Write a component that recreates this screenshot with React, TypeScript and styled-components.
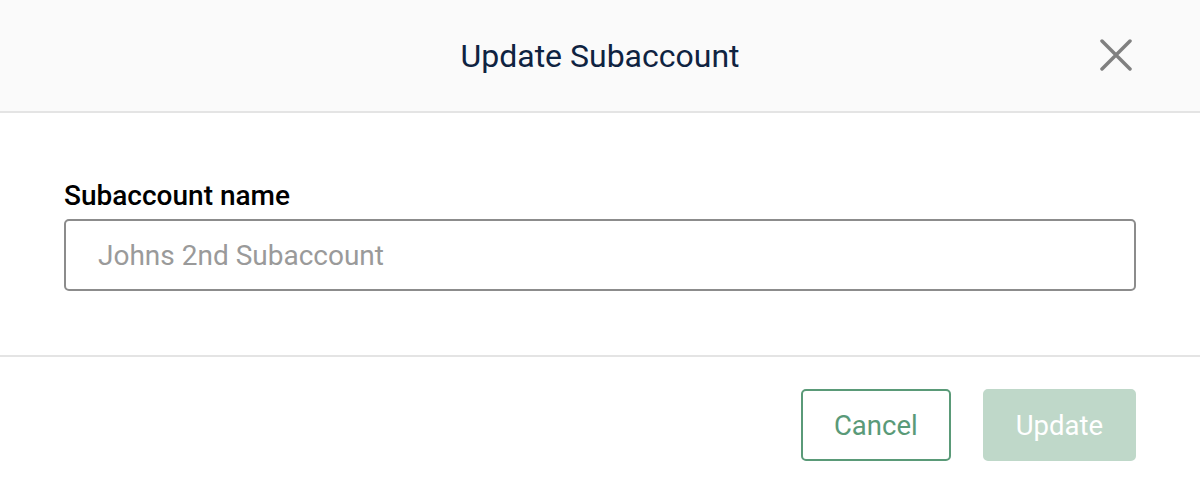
import styled, { createGlobalStyle } from "styled-components";

const GlobalStyle = createGlobalStyle`
  html, body {
    margin: 0;
    padding: 0;
    background: #fff;
    font-family: Roboto, "Liberation Sans", sans-serif;
  }
`;

const Modal = styled.div`
  width: 1200px;
  height: 490px;
  display: flex;
  flex-direction: column;
  background: #fff;
  overflow: hidden;
`;

const Header = styled.header`
  position: relative;
  height: 111px;
  display: flex;
  align-items: center;
  justify-content: center;
  background: #fafafa;
  border-bottom: 2px solid #e4e4e4;
  flex-shrink: 0;
`;

const Title = styled.h2`
  margin: 0;
  font-size: 32px;
  font-weight: 400;
  color: #0f2341;
`;

const CloseButton = styled.button`
  position: absolute;
  right: 66px;
  top: 37px;
  width: 36px;
  height: 36px;
  padding: 0;
  border: 0;
  background: none;
  display: flex;
  align-items: center;
  justify-content: center;
  cursor: pointer;
`;

const Body = styled.section`
  padding: 67px 64px 64px;
  border-bottom: 2px solid #e4e4e4;
  display: flex;
  flex-direction: column;
  gap: 7px;
`;

const Label = styled.label`
  font-size: 28px;
  line-height: 32px;
  font-weight: 500;
  color: #000;
`;

const Input = styled.input`
  box-sizing: border-box;
  height: 72px;
  width: 100%;
  padding: 0 32px;
  border: 2px solid #8c8c8c;
  border-radius: 5px;
  font-family: inherit;
  font-size: 28px;
  color: #222;
  outline: none;

  &::placeholder {
    color: #9a9a9a;
  }
`;

const Footer = styled.footer`
  display: flex;
  justify-content: flex-end;
  gap: 32px;
  padding: 32px 64px;
`;

const Button = styled.button<{ $primary?: boolean }>`
  box-sizing: border-box;
  height: 72px;
  padding: 0 31px;
  border-radius: 5px;
  font-family: inherit;
  font-size: 27.5px;
  border: 2px solid ${(p) => (p.$primary ? "#bfd8c9" : "#5a9a78")};
  background: ${(p) => (p.$primary ? "#bfd8c9" : "#fff")};
  color: ${(p) => (p.$primary ? "#fff" : "#5a9a78")};
  cursor: ${(p) => (p.$primary ? "not-allowed" : "pointer")};
`;

export default function App() {
  return (
    <>
      <GlobalStyle />
      <Modal>
        <Header>
          <Title>Update Subaccount</Title>
          <CloseButton aria-label="Close">
            <svg width="32" height="32" viewBox="0 0 32 32">
              <path
                d="M2 2 L30 30 M30 2 L2 30"
                stroke="#808080"
                strokeWidth="3.5"
                strokeLinecap="round"
              />
            </svg>
          </CloseButton>
        </Header>
        <Body>
          <Label htmlFor="subaccount-name">Subaccount name</Label>
          <Input id="subaccount-name" placeholder="Johns 2nd Subaccount" />
        </Body>
        <Footer>
          <Button>Cancel</Button>
          <Button $primary disabled>
            Update
          </Button>
        </Footer>
      </Modal>
    </>
  );
}
